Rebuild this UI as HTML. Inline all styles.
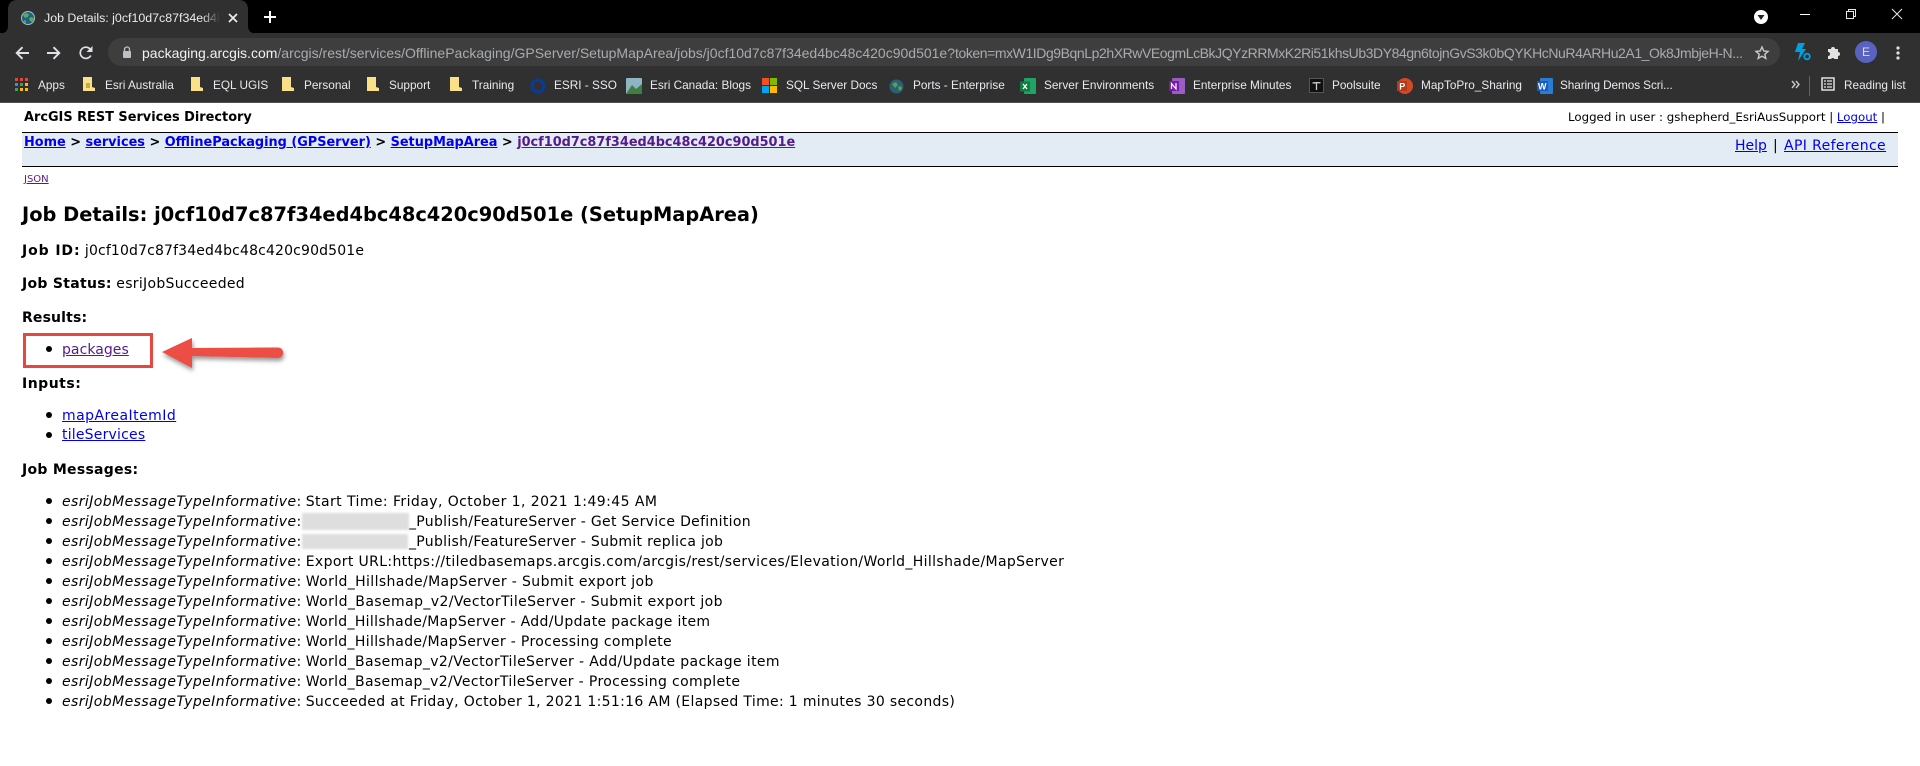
<!DOCTYPE html>
<html lang="en"><head><meta charset="utf-8"><title>Job Details</title>
<style>
html,body{margin:0;padding:0;width:1920px;height:766px;overflow:hidden;background:#fff}
.a{position:absolute;white-space:nowrap}
.u{font-family:"Liberation Sans",sans-serif;color:#e8eaed;font-size:11.8px;height:20px;line-height:20px;top:75px}
.d{font-family:"DejaVu Sans",sans-serif;font-size:14px;height:20px;line-height:20px;color:#000}
.d a{color:#00e;text-decoration:underline}
.d a.v{color:#551a8b}
.d i{letter-spacing:.42px}
.li{left:62px}
.bu{position:absolute;left:46px;width:6px;height:6px;border-radius:50%;background:#000}
svg{position:absolute;overflow:visible}
</style></head><body>
<div class="a" style="left:0;top:0;width:1920px;height:33px;background:#000"></div>
<div class="a" style="left:0;top:33px;width:1920px;height:70px;background:#303030"></div>
<div class="a" style="left:0;top:102px;width:1920px;height:1px;background:#505050"></div>
<!-- tab -->
<svg style="left:0;top:0" width="260" height="34"><path d="M0 33.5C6 33.5 8 30 8 26V9C8 4 11 0 17 0H239C245 0 248 4 248 9V26C248 30 250 33.5 256 33.5Z" fill="#303030"/></svg>
<svg style="left:21px;top:11px" width="14" height="14" viewBox="0 0 14 14"><circle cx="7" cy="7" r="6.5" fill="#1f5f8c"/><path d="M2 4l3-2 3 1-1 3-3 1zM8 7l3-1 2 2-2 3-2-1zM3 9l2 1v2l-2-1z" fill="#5cae4a"/><circle cx="7" cy="7" r="6.5" fill="none" stroke="#a8c0c8"/></svg>
<div class="a" style="left:44px;top:8px;width:176px;height:20px;overflow:hidden;font:12.4px/20px 'Liberation Sans',sans-serif;color:#e8eaed">Job Details: j0cf10d7c87f34ed4bc48c420c90d501e (SetupMapArea)</div>
<div class="a" style="left:202px;top:8px;width:18px;height:20px;background:linear-gradient(90deg,rgba(48,48,48,0),#303030)"></div>
<svg style="left:228px;top:13px" width="10" height="10"><path d="M1 1l8 8M9 1l-8 8" stroke="#e8eaed" stroke-width="1.8"/></svg>
<svg style="left:264px;top:11px" width="12" height="12"><path d="M6 0v12M0 6h12" stroke="#fff" stroke-width="2"/></svg>
<!-- window controls -->
<svg style="left:1754px;top:10px" width="14" height="14"><circle cx="7" cy="7" r="7" fill="#fff"/><path d="M3.5 5h7L7 10z" fill="#222"/></svg>
<svg style="left:1800px;top:14px" width="10" height="2"><path d="M0 .5h10" stroke="#fff"/></svg>
<svg style="left:1846px;top:9px" width="10" height="10"><path d="M.5 2.5h7v7h-7zM2.5 2.5v-2h7v7h-2" fill="none" stroke="#e8e8e8"/></svg>
<svg style="left:1892px;top:9px" width="10" height="10"><path d="M0 0l10 10M10 0L0 10" stroke="#e8e8e8"/></svg>
<!-- nav -->
<svg style="left:15px;top:46px" width="14" height="14"><path d="M14 7H2M7.5 1.2L1.7 7l5.8 5.8" fill="none" stroke="#dfe1e4" stroke-width="1.9"/></svg>
<svg style="left:47px;top:46px" width="14" height="14"><path d="M0 7h12M6.5 1.2L12.3 7l-5.800 5.800" fill="none" stroke="#dfe1e4" stroke-width="1.900"/></svg>
<svg style="left:79px;top:46px" width="14" height="14"><path d="M11.800 9.500A5.600 5.600 0 1 1 11 3" fill="none" stroke="#dfe1e4" stroke-width="1.700"/><path d="M13.500 0v6h-6z" fill="#dfe1e4"/></svg>
<div class="a" style="left:108px;top:38px;width:1672px;height:28px;border-radius:14px;background:#3e3e3e"></div>
<svg style="left:122px;top:46px" width="10" height="13"><path d="M2.500 5V3.500a2.500 2.500 0 0 1 5 0V5" fill="none" stroke="#bdc1c6" stroke-width="1.300"/><rect x="1" y="5" width="8" height="7" rx="1" fill="#bdc1c6"/></svg>
<div class="a" style="left:142px;top:42px;width:1600px;height:22px;overflow:hidden;font:14px/22px 'Liberation Sans',sans-serif;color:#a8abaf"><span style="color:#f0f1f2">packaging.arcgis.com</span>/arcgis/rest/services/OfflinePackaging/GPServer/SetupMapArea/jobs/j0cf10d7c87f34ed4bc48c420c90d501e?<span style="letter-spacing:-.43px">token=mxW1IDg9BqnLp2hXRwVEogmLcBkJQYzRRMxK2Ri51khsUb3DY84gn6tojnGvS3k0bQYKHcNuR4ARHu2A1_Ok8JmbjeH-N...</span></div>
<svg style="left:1755px;top:46px" width="14" height="14" viewBox="0 0 14 14"><path d="M7 1l1.800 4 4.200.4-3.200 2.800 1 4.200L7 10.200 3.200 12.400l1-4.200L1 5.400 5.200 5z" fill="none" stroke="#c8cacc" stroke-width="1.400"/></svg>
<svg style="left:1795px;top:43px" width="16" height="18" viewBox="0 0 16 18"><path d="M3 0h7L7 6h4L3 18l2-9H0z" fill="#00a0e3"/><circle cx="12" cy="13.500" r="2.800" fill="none" stroke="#00a0e3" stroke-width="1.800"/></svg>
<svg style="left:1827px;top:45px" width="15" height="15" viewBox="0 0 15 15"><path d="M1 4h3a2 2 0 0 1 4 0h3v3a2 2 0 0 1 0 4v3H7.500a2 2 0 0 0-3.500 0H1v-3a2 2 0 0 0 0-4z" fill="#e3e3e3"/></svg>
<div class="a" style="left:1855px;top:41px;width:22px;height:22px;border-radius:50%;background:#5a62bf;color:#d8dbf2;font:12px/22px 'Liberation Sans',sans-serif;text-align:center">E</div>
<svg style="left:1896px;top:46px" width="4" height="14"><circle cx="2" cy="2" r="1.600" fill="#dfe1e4"/><circle cx="2" cy="7" r="1.600" fill="#dfe1e4"/><circle cx="2" cy="12" r="1.600" fill="#dfe1e4"/></svg>
<!-- bookmarks -->
<svg style="left:15px;top:78px" width="14" height="14"><g fill="#ea4335"><rect width="3" height="3"/><rect x="5" width="3" height="3"/><rect x="10" width="3" height="3"/></g><g fill="#4285f4"><rect y="5" width="3" height="3"/></g><g fill="#34a853"><rect x="5" y="5" width="3" height="3"/><rect y="10" width="3" height="3"/></g><g fill="#fbbc05"><rect x="10" y="5" width="3" height="3"/><rect x="5" y="10" width="3" height="3"/><rect x="10" y="10" width="3" height="3"/></g></svg>
<div class="a u" style="left:38px">Apps</div>
<svg style="left:83px;top:77px" width="12" height="14"><path d="M0 0h9v10l3 1v3H0z" fill="#fbe08a"/><rect x="3" y="6" width="4" height="5" fill="#cfa93f"/></svg>
<div class="a u" style="left:105px">Esri Australia</div>
<svg style="left:191px;top:77px" width="12" height="14"><path d="M0 0h9v10l3 1v3H0z" fill="#fbe08a"/></svg>
<div class="a u" style="left:213px">EQL UGIS</div>
<svg style="left:282px;top:77px" width="12" height="14"><path d="M0 0h9v10l3 1v3H0z" fill="#fbe08a"/></svg>
<div class="a u" style="left:304px">Personal</div>
<svg style="left:367px;top:77px" width="12" height="14"><path d="M0 0h9v10l3 1v3H0z" fill="#fbe08a"/></svg>
<div class="a u" style="left:389px">Support</div>
<svg style="left:450px;top:77px" width="12" height="14"><path d="M0 0h9v10l3 1v3H0z" fill="#fbe08a"/></svg>
<div class="a u" style="left:472px">Training</div>
<svg style="left:530px;top:78px" width="16" height="16"><circle cx="8" cy="8" r="6" fill="none" stroke="#0c3a8c" stroke-width="3.500"/></svg>
<div class="a u" style="left:554px">ESRI - SSO</div>
<svg style="left:626px;top:78px" width="16" height="16"><rect width="16" height="16" rx="1" fill="#8fb4c4"/><path d="M0 16l6-9 4 4 6-5v10z" fill="#3f7f3f"/></svg>
<div class="a u" style="left:650px">Esri Canada: Blogs</div>
<svg style="left:762px;top:78px" width="15" height="15"><rect width="7" height="7" fill="#f25022"/><rect x="8" width="7" height="7" fill="#7fba00"/><rect y="8" width="7" height="7" fill="#00a4ef"/><rect x="8" y="8" width="7" height="7" fill="#ffb900"/></svg>
<div class="a u" style="left:786px">SQL Server Docs</div>
<svg style="left:889px;top:79px" width="15" height="15"><circle cx="7.500" cy="7.500" r="7" fill="#2a5f75"/><path d="M3 5l4-2 2 3-3 3zM9 8l3-1 1 3-3 2z" fill="#5ba04a"/></svg>
<div class="a u" style="left:913px">Ports - Enterprise</div>
<svg style="left:1020px;top:78px" width="16" height="16"><rect x="4" width="12" height="16" rx="1" fill="#21a366"/><rect x="0" y="3.500" width="10" height="10" fill="#107c41"/><path d="M3 6l4 5M7 6l-4 5" stroke="#fff" stroke-width="1.300"/></svg>
<div class="a u" style="left:1044px">Server Environments</div>
<svg style="left:1169px;top:78px" width="16" height="16"><rect x="3" width="13" height="16" rx="1" fill="#9a5dc4"/><rect x="0" y="3" width="10" height="10" fill="#7719aa"/><path d="M2.500 11V5.500l4.500 5.500V5" fill="none" stroke="#fff" stroke-width="1.200"/></svg>
<div class="a u" style="left:1193px">Enterprise Minutes</div>
<svg style="left:1309px;top:78px" width="15" height="15"><rect x=".5" y=".5" width="14" height="14" fill="#111" stroke="#555"/><path d="M3.500 5c2 0 7-1 8 0M7.500 4v8" stroke="#ccc" stroke-width="1.300" fill="none"/></svg>
<div class="a u" style="left:1332px">Poolsuite</div>
<svg style="left:1397px;top:78px" width="16" height="16"><circle cx="8" cy="8" r="8" fill="#d04a25"/><rect x="0" y="3" width="10" height="10" fill="#b7391b"/><text x="2.300" y="11.500" font-family="Liberation Sans" font-size="9" font-weight="700" fill="#fff">P</text></svg>
<div class="a u" style="left:1421px">MapToPro_Sharing</div>
<svg style="left:1537px;top:78px" width="16" height="16"><rect x="3" width="13" height="16" rx="1" fill="#2b7cd3"/><rect x="0" y="3" width="11" height="10" fill="#185abd"/><text x="1" y="11.500" font-family="Liberation Sans" font-size="9" font-weight="700" fill="#fff">W</text></svg>
<div class="a u" style="left:1560px;letter-spacing:-.1px">Sharing Demos Scri...</div>
<svg style="left:1791px;top:80px" width="9" height="9"><path d="M1 1l3 3.500L1 8M5 1l3 3.500L5 8" fill="none" stroke="#c8cacc" stroke-width="1.400"/></svg>
<div class="a" style="left:1809px;top:76px;width:1px;height:20px;background:#5f6368"></div>
<svg style="left:1821px;top:77px" width="14" height="14"><rect x="1" y="1" width="12" height="12" fill="none" stroke="#dfe1e4" stroke-width="1.500"/><path d="M3 4h2M6 4h5M3 7h2M6 7h5M3 10h2M6 10h5" stroke="#dfe1e4" stroke-width="1.200"/></svg>
<div class="a u" style="left:1844px">Reading list</div>
<!-- page -->
<div class="a d" style="left:24px;top:108px;font-size:12.9px;font-weight:700">ArcGIS REST Services Directory</div>
<div class="a d" style="left:1568px;top:107px;font-size:11.8px">Logged in user : gshepherd_EsriAusSupport | <a href="#">Logout</a> |</div>
<div class="a" style="left:22px;top:132px;width:1876px;height:33px;background:#e3ecf5;border-top:1px solid #000;border-bottom:1px solid #000"></div>
<div class="a d" style="left:24px;top:133px;font-weight:700;font-size:12.86px"><a href="#">Home</a> &gt; <a href="#">services</a> &gt; <a href="#">OfflinePackaging (GPServer)</a> &gt; <a href="#" >SetupMapArea</a> &gt; <a href="#" class="v">j0cf10d7c87f34ed4bc48c420c90d501e</a></div>
<div class="a d" style="left:1735px;top:136px"><a href="#">Help</a></div>
<div class="a d" style="left:1773px;top:136px">|</div>
<div class="a d" style="left:1784px;top:136px;letter-spacing:.38px"><a href="#">API Reference</a></div>
<div class="a d" style="left:24px;top:170px;font-size:10px"><a href="#" class="v">JSON</a></div>
<div class="a d" style="left:22px;top:203px;font-size:19.4px;font-weight:700;line-height:24px;height:24px">Job Details: j0cf10d7c87f34ed4bc48c420c90d501e (SetupMapArea)</div>
<div class="a d" style="left:22px;top:241px"><b style="letter-spacing:.9px">Job ID:</b> <span style="letter-spacing:.15px">j0cf10d7c87f34ed4bc48c420c90d501e</span></div>
<div class="a d" style="left:22px;top:274px"><b style="letter-spacing:.3px">Job Status:</b> <span style="letter-spacing:.3px">esriJobSucceeded</span></div>
<div class="a d" style="left:22px;top:308px"><b style="letter-spacing:.15px">Results:</b></div>
<div class="bu" style="top:346px"></div>
<div class="a d li" style="top:340px;letter-spacing:.05px"><a href="#" class="v">packages</a></div>
<div class="a" style="left:23px;top:333px;width:124px;height:29px;border:3px solid #e8473f"></div>
<svg style="left:155px;top:330px" width="140" height="50"><defs><filter id="s" x="-20%" y="-30%" width="140%" height="170%"><feDropShadow dx="1" dy="3" stdDeviation="2" flood-color="#000" flood-opacity=".4"/></filter></defs><path d="M7 22L37 8v10l86-.5a5 5 0 0 1 0 10.500L37 26v12z" fill="#ec4d45" filter="url(#s)"/></svg>
<div class="a d" style="left:22px;top:374px"><b style="letter-spacing:.5px">Inputs:</b></div>
<div class="bu" style="top:412px"></div>
<div class="a d li" style="top:406px;letter-spacing:.46px"><a href="#">mapAreaItemId</a></div>
<div class="bu" style="top:432px"></div>
<div class="a d li" style="top:425px;letter-spacing:.2px"><a href="#">tileServices</a></div>
<div class="a d" style="left:22px;top:460px"><b style="letter-spacing:.28px">Job Messages:</b></div>
<div class="bu" style="top:498px"></div><div class="a d li" style="top:492px"><i>esriJobMessageTypeInformative</i>: <span style="letter-spacing:.43px">Start Time: Friday, October 1, 2021 1:49:45 AM</span></div>
<div class="bu" style="top:518px"></div><div class="a d li" style="top:512px"><i>esriJobMessageTypeInformative</i>:</div><div class="a d" style="left:409px;top:512px;letter-spacing:.3px">_Publish/FeatureServer - Get Service Definition</div>
<div class="bu" style="top:538px"></div><div class="a d li" style="top:532px"><i>esriJobMessageTypeInformative</i>:</div><div class="a d" style="left:409px;top:532px;letter-spacing:.3px">_Publish/FeatureServer - Submit replica job</div>
<div class="bu" style="top:558px"></div><div class="a d li" style="top:552px"><i>esriJobMessageTypeInformative</i>: <span style="letter-spacing:.36px">Export URL:https://tiledbasemaps.arcgis.com/arcgis/rest/services/Elevation/World_Hillshade/MapServer</span></div>
<div class="bu" style="top:578px"></div><div class="a d li" style="top:572px"><i>esriJobMessageTypeInformative</i>: <span style="letter-spacing:.38px">World_Hillshade/MapServer - Submit export job</span></div>
<div class="bu" style="top:598px"></div><div class="a d li" style="top:592px"><i>esriJobMessageTypeInformative</i>: <span style="letter-spacing:.41px">World_Basemap_v2/VectorTileServer - Submit export job</span></div>
<div class="bu" style="top:618px"></div><div class="a d li" style="top:612px"><i>esriJobMessageTypeInformative</i>: <span style="letter-spacing:.33px">World_Hillshade/MapServer - Add/Update package item</span></div>
<div class="bu" style="top:638px"></div><div class="a d li" style="top:632px"><i>esriJobMessageTypeInformative</i>: <span style="letter-spacing:.34px">World_Hillshade/MapServer - Processing complete</span></div>
<div class="bu" style="top:658px"></div><div class="a d li" style="top:652px"><i>esriJobMessageTypeInformative</i>: <span style="letter-spacing:.37px">World_Basemap_v2/VectorTileServer - Add/Update package item</span></div>
<div class="bu" style="top:678px"></div><div class="a d li" style="top:672px"><i>esriJobMessageTypeInformative</i>: <span style="letter-spacing:.36px">World_Basemap_v2/VectorTileServer - Processing complete</span></div>
<div class="bu" style="top:698px"></div><div class="a d li" style="top:692px"><i>esriJobMessageTypeInformative</i>: <span style="letter-spacing:.33px">Succeeded at Friday, October 1, 2021 1:51:16 AM (Elapsed Time: 1 minutes 30 seconds)</span></div>
<div class="a" style="left:302px;top:513px;width:107px;height:17px;background:#dedede;filter:blur(1px)"></div>
<div class="a" style="left:302px;top:534px;width:106px;height:15px;background:#dedede;filter:blur(1px)"></div>
</body></html>
